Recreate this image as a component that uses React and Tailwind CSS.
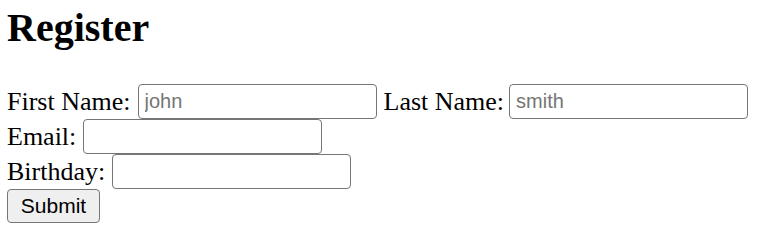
export default function App() {
  const serif = { fontFamily: '"Liberation Serif", "Times New Roman", serif' };
  const inputCls =
    "h-[35px] w-[239px] shrink-0 rounded-[4px] border-[1.5px] border-[#767676] bg-white px-[6px] text-[20px] text-black placeholder:text-[#757575] outline-none";
  const sans = { fontFamily: '"Liberation Sans", Arial, sans-serif' };
  return (
    <div className="min-h-[245px] w-[768px] bg-white pl-[7px] pt-[5px] text-black" style={serif}>
      <h1 className="h-[45px] text-[40px] font-bold leading-[1.15]">Register</h1>
      <form className="mt-[34px] flex flex-col text-[26px]" onSubmit={(e) => e.preventDefault()}>
        <div className="flex h-[35px] items-center">
          <label className="mr-[7px]">First Name:</label>
          <input className={inputCls} style={sans} placeholder="john" />
          <label className="ml-[7px] mr-[5px]">Last Name:</label>
          <input className={inputCls} style={sans} placeholder="smith" />
        </div>
        <div className="flex h-[35px] items-center">
          <label className="mr-[7px]">Email:</label>
          <input className={inputCls} style={sans} />
        </div>
        <div className="flex h-[35px] items-center">
          <label className="mr-[7px]">Birthday:</label>
          <input className={inputCls} style={sans} />
        </div>
        <div className="flex h-[34px] items-center">
          <button
            type="submit"
            className="h-[34px] w-[93px] rounded-[4px] border-[1.5px] border-[#767676] bg-[#efefef] text-[21px] text-black"
            style={sans}
          >
            Submit
          </button>
        </div>
      </form>
    </div>
  );
}
